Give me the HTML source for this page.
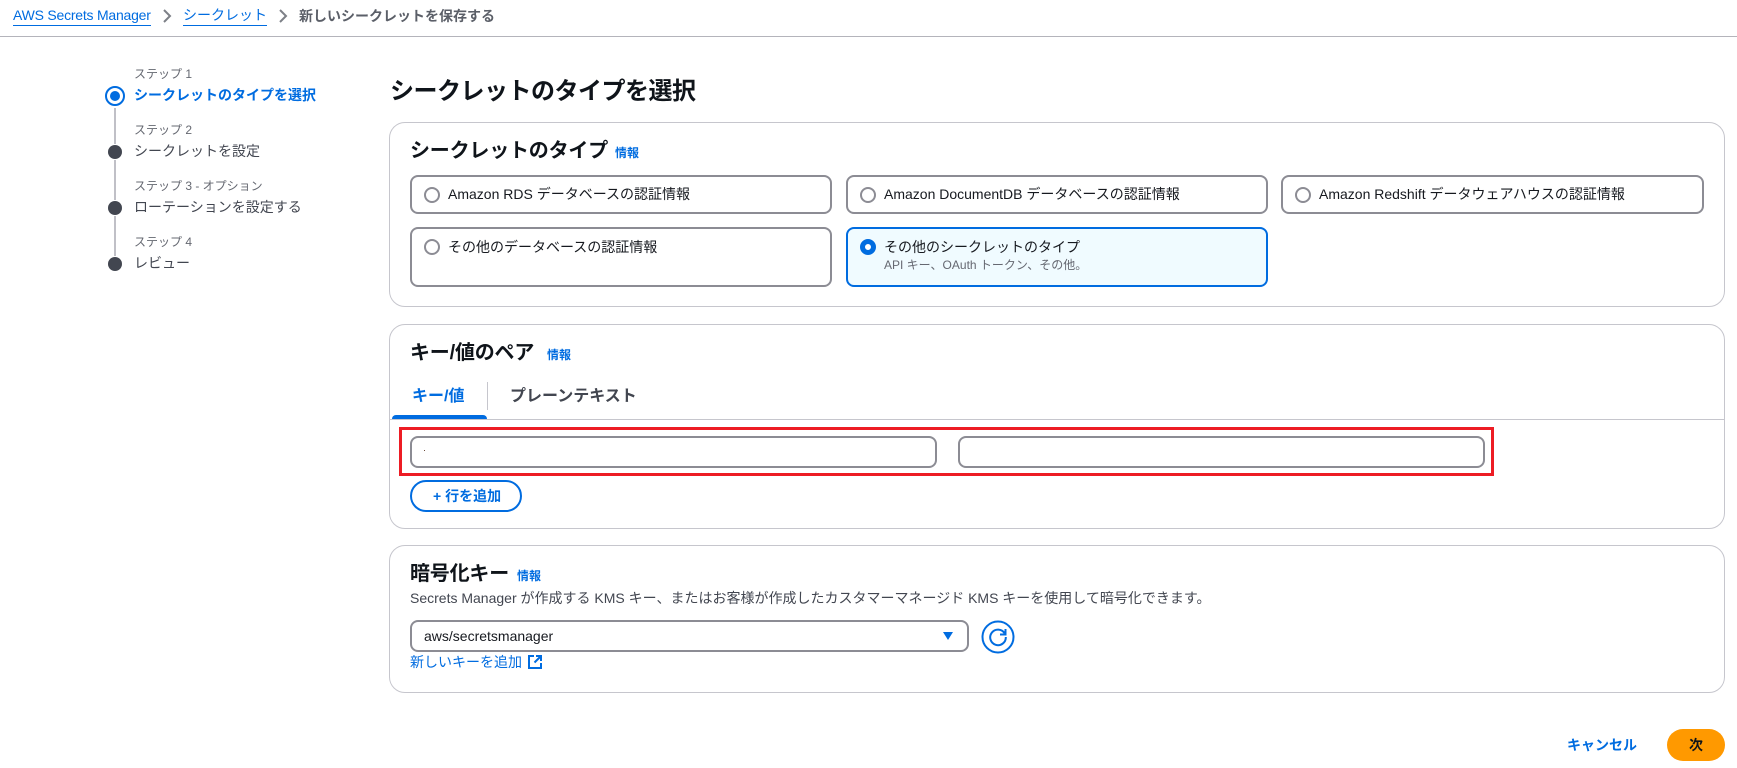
<!DOCTYPE html>
<html lang="ja">
<head>
<meta charset="utf-8">
<title>新しいシークレットを保存する</title>
<style>
html,body{margin:0;padding:0;background:#fff}
body{position:relative;width:1737px;height:768px;overflow:hidden;font-family:"Liberation Sans","Noto Sans CJK JP",sans-serif;color:#16191f}
.t{position:absolute;white-space:nowrap;line-height:20px;font-size:14px}
.b{position:absolute;box-sizing:border-box}
.card{border:1px solid #c6c6cd;border-radius:16px;background:#fff}
.opt{border:2px solid #8c8c94;border-radius:8px;background:#fff}
.rad{position:absolute;box-sizing:border-box;width:16px;height:16px;border:2px solid #8c8c94;border-radius:50%;background:#fff}
.h2{font-size:20px;font-weight:700;line-height:26px;color:#0f141a;letter-spacing:-.2px}
.info{font-size:12px;font-weight:700;color:#006ce0;line-height:16px}
.lab{font-size:12px;color:#656871;line-height:16px}
.st{color:#424650}
.dot{position:absolute;width:14px;height:14px;border-radius:50%;background:#424650}
.ln{position:absolute;left:114px;width:2px;background:#c0c0c7}
.inp{border:2px solid #8c8c94;border-radius:8px;background:#fff}
</style>
</head>
<body>
<!-- breadcrumb -->
<div class="t" style="left:13px;top:6px;color:#006ce0;border-bottom:1px solid #006ce0;line-height:19px;letter-spacing:-.22px">AWS Secrets Manager</div>
<svg class="b" style="left:161px;top:8px" width="12" height="16" viewBox="0 0 12 16"><path d="M3 2l6 6-6 6" fill="none" stroke="#7d8087" stroke-width="2"/></svg>
<div class="t" style="left:183px;top:6px;color:#006ce0;border-bottom:1px solid #006ce0;line-height:19px">シークレット</div>
<svg class="b" style="left:277px;top:8px" width="12" height="16" viewBox="0 0 12 16"><path d="M3 2l6 6-6 6" fill="none" stroke="#7d8087" stroke-width="2"/></svg>
<div class="t" style="left:299px;top:6px;color:#5b5f68;font-weight:700;">新しいシークレットを保存する</div>
<div class="b" style="left:0;top:36px;width:1737px;height:1px;background:#b4b4bb"></div>

<!-- steps -->
<div class="ln" style="top:108px;height:36px"></div>
<div class="ln" style="top:160px;height:40px"></div>
<div class="ln" style="top:216px;height:40px"></div>
<div class="b" style="left:105px;top:86px;width:20px;height:20px;border:2px solid #006ce0;border-radius:50%;background:#fff"></div>
<div class="b" style="left:110px;top:91px;width:10px;height:10px;border-radius:50%;background:#006ce0"></div>
<div class="dot" style="left:108px;top:145px"></div>
<div class="dot" style="left:108px;top:201px"></div>
<div class="dot" style="left:108px;top:257px"></div>
<div class="t lab" style="left:134px;top:66px">ステップ 1</div>
<div class="t" style="left:134px;top:85px;color:#006ce0;font-weight:700">シークレットのタイプを選択</div>
<div class="t lab" style="left:134px;top:122px">ステップ 2</div>
<div class="t st" style="left:134px;top:141px">シークレットを設定</div>
<div class="t lab" style="left:134px;top:178px">ステップ 3 - オプション</div>
<div class="t st" style="left:134px;top:197px">ローテーションを設定する</div>
<div class="t lab" style="left:134px;top:234px">ステップ 4</div>
<div class="t st" style="left:134px;top:253px">レビュー</div>

<!-- title -->
<div class="t" style="left:390px;top:76px;font-size:24px;font-weight:700;line-height:32px;color:#0f141a;letter-spacing:-.5px">シークレットのタイプを選択</div>

<!-- card 1 -->
<div class="b card" style="left:389px;top:122px;width:1336px;height:185px"></div>
<div class="t h2" style="left:410px;top:138px">シークレットのタイプ</div>
<div class="t info" style="left:615px;top:145px">情報</div>

<div class="b opt" style="left:410px;top:175px;width:422px;height:39px"></div>
<div class="rad" style="left:424px;top:187px"></div>
<div class="t" style="left:448px;top:184px">Amazon RDS データベースの認証情報</div>

<div class="b opt" style="left:846px;top:175px;width:422px;height:39px"></div>
<div class="rad" style="left:860px;top:187px"></div>
<div class="t" style="left:884px;top:184px">Amazon DocumentDB データベースの認証情報</div>

<div class="b opt" style="left:1281px;top:175px;width:423px;height:39px"></div>
<div class="rad" style="left:1295px;top:187px"></div>
<div class="t" style="left:1319px;top:184px">Amazon Redshift データウェアハウスの認証情報</div>

<div class="b opt" style="left:410px;top:227px;width:422px;height:60px"></div>
<div class="rad" style="left:424px;top:239px"></div>
<div class="t" style="left:448px;top:237px">その他のデータベースの認証情報</div>

<div class="b opt" style="left:846px;top:227px;width:422px;height:60px;border-color:#006ce0;background:#f0fbff"></div>
<div class="b" style="left:860px;top:239px;width:16px;height:16px;border:5px solid #006ce0;border-radius:50%;background:#fff"></div>
<div class="t" style="left:884px;top:237px">その他のシークレットのタイプ</div>
<div class="t lab" style="left:884px;top:257px">API キー、OAuth トークン、その他。</div>

<!-- card 2 -->
<div class="b card" style="left:389px;top:324px;width:1336px;height:205px"></div>
<div class="t h2" style="left:410px;top:340px">キー/値のペア</div>
<div class="t info" style="left:547px;top:347px">情報</div>
<div class="t" style="left:412px;top:387px;font-size:16px;font-weight:700;color:#006ce0">キー/値</div>
<div class="b" style="left:487px;top:382px;width:1px;height:28px;background:#c6c6cd"></div>
<div class="t" style="left:510px;top:387px;font-size:16px;font-weight:700;color:#424650">プレーンテキスト</div>
<div class="b" style="left:390px;top:419px;width:1335px;height:1px;background:#c6c6cd"></div>
<div class="b" style="left:392px;top:415px;width:95px;height:4px;background:#006ce0;border-radius:4px 4px 0 0"></div>
<div class="b" style="left:399px;top:427px;width:1095px;height:49px;border:3px solid #ed1c24"></div>
<div class="b inp" style="left:410px;top:436px;width:527px;height:32px"></div>
<div class="b inp" style="left:958px;top:436px;width:527px;height:32px"></div>
<div class="b" style="left:424px;top:450px;width:1px;height:1px;background:#6b4a3a"></div>
<div class="b" style="left:410px;top:480px;width:112px;height:32px;border:2px solid #006ce0;border-radius:20px;background:#fff"></div>
<div class="t" style="left:433px;top:486px;color:#006ce0;font-weight:700">+ 行を追加</div>

<!-- card 3 -->
<div class="b card" style="left:389px;top:545px;width:1336px;height:148px"></div>
<div class="t h2" style="left:410px;top:561px">暗号化キー</div>
<div class="t info" style="left:517px;top:568px">情報</div>
<div class="t" style="left:410px;top:588px;color:#424650;font-size:14px">Secrets Manager が作成する KMS キー、またはお客様が作成したカスタマーマネージド KMS キーを使用して暗号化できます。</div>
<div class="b inp" style="left:410px;top:620px;width:559px;height:32px"></div>
<div class="t" style="left:424px;top:626px">aws/secretsmanager</div>
<svg class="b" style="left:942px;top:631px" width="12" height="10" viewBox="0 0 12 10"><path d="M1 1h10L6 9z" fill="#006ce0"/></svg>
<svg class="b" style="left:981px;top:620px" width="34" height="34" viewBox="0 0 34 34">
<circle cx="17" cy="17" r="15.5" fill="#fff" stroke="#006ce0" stroke-width="2"/>
<path d="M23.6 13.2A7.8 7.8 0 1 0 24.8 17" fill="none" stroke="#006ce0" stroke-width="2"/>
<path d="M24.5 9v5.5h-5.5" fill="none" stroke="#006ce0" stroke-width="2"/>
</svg>
<div class="t" style="left:410px;top:652px;color:#006ce0">新しいキーを追加</div>
<svg class="b" style="left:527px;top:654px" width="16" height="16" viewBox="0 0 16 16">
<path d="M7 2H2v12h12V9" fill="none" stroke="#006ce0" stroke-width="2"/>
<path d="M9 2h5v5M14 2L7.5 8.5" fill="none" stroke="#006ce0" stroke-width="2"/>
</svg>

<!-- footer -->
<div class="t" style="left:1567px;top:735px;color:#006ce0;font-weight:700">キャンセル</div>
<div class="b" style="left:1667px;top:729px;width:58px;height:32px;border-radius:20px;background:#ff9900"></div>
<div class="t" style="left:1689px;top:735px;font-weight:700;color:#0f141a">次</div>
</body>
</html>
